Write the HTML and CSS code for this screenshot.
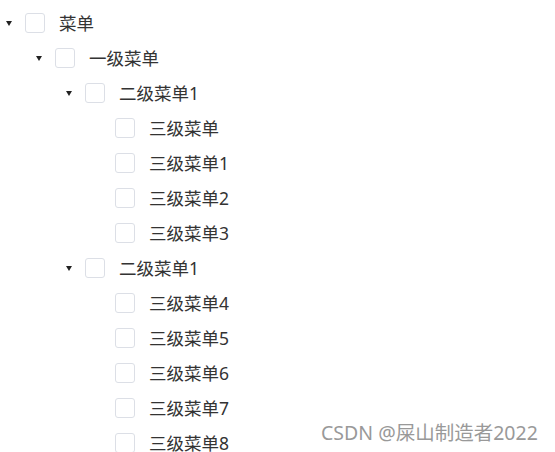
FILE: index.html
```html
<!DOCTYPE html>
<html>
<head>
<meta charset="utf-8">
<link rel="stylesheet" href="styles.css">
</head>
<body>
<div class="tree">
  <div class="row l0"><span class="exp open"></span><span class="cb"></span><span class="label">菜单</span></div>
  <div class="row l1"><span class="exp open"></span><span class="cb"></span><span class="label">一级菜单</span></div>
  <div class="row l2"><span class="exp open"></span><span class="cb"></span><span class="label">二级菜单1</span></div>
  <div class="row l3"><span class="exp"></span><span class="cb"></span><span class="label">三级菜单</span></div>
  <div class="row l3"><span class="exp"></span><span class="cb"></span><span class="label">三级菜单1</span></div>
  <div class="row l3"><span class="exp"></span><span class="cb"></span><span class="label">三级菜单2</span></div>
  <div class="row l3"><span class="exp"></span><span class="cb"></span><span class="label">三级菜单3</span></div>
  <div class="row l2"><span class="exp open"></span><span class="cb"></span><span class="label">二级菜单1</span></div>
  <div class="row l3"><span class="exp"></span><span class="cb"></span><span class="label">三级菜单4</span></div>
  <div class="row l3"><span class="exp"></span><span class="cb"></span><span class="label">三级菜单5</span></div>
  <div class="row l3"><span class="exp"></span><span class="cb"></span><span class="label">三级菜单6</span></div>
  <div class="row l3"><span class="exp"></span><span class="cb"></span><span class="label">三级菜单7</span></div>
  <div class="row l3"><span class="exp"></span><span class="cb"></span><span class="label">三级菜单8</span></div>
</div>
<div class="watermark">CSDN @屎山制造者2022</div>
</body>
</html>
```
FILE: styles.css
```css
html, body {
  margin: 0;
  padding: 0;
  background: #fff;
  overflow: hidden;
  height: 452px;
}
body {
  position: relative;
  font-family: "Noto Sans", "Noto Sans CJK SC", sans-serif;
  color: #333;
}
.tree {
  padding-top: 5px;
}
.row {
  display: flex;
  align-items: center;
  height: 35px;
}
.l1 { padding-left: 30px; }
.l2 { padding-left: 60px; }
.l3 { padding-left: 90px; }
.exp {
  width: 25px;
  height: 20px;
  display: flex;
  align-items: center;
  padding-left: 6px;
  box-sizing: border-box;
}
.exp.open::before {
  content: "";
  display: block;
  width: 0;
  height: 0;
  border-left: 3.5px solid transparent;
  border-right: 3.5px solid transparent;
  border-top: 5px solid #222;
  margin-top: 2px;
}
.cb {
  width: 20px;
  height: 20px;
  box-sizing: border-box;
  border: 1px solid #dcdfe6;
  border-radius: 3px;
  background: #fff;
}
.label {
  margin-left: 14px;
  font-size: 17.5px;
  line-height: 20px;
  color: #333;
}
.watermark {
  position: absolute;
  left: 321px;
  top: 420px;
  font-size: 19.5px;
  line-height: 26px;
  color: #999;
  text-shadow: 0 0 1px #fff;
  white-space: nowrap;
}
```
